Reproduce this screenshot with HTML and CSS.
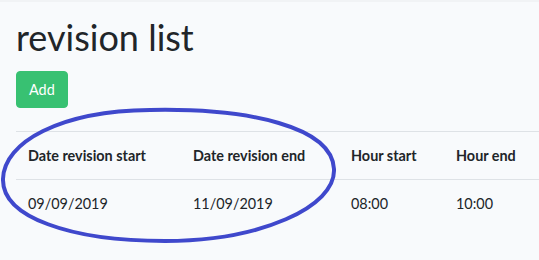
FILE: index.html
```html
<!DOCTYPE html>
<html lang="en">
<head>
    <meta charset="UTF-8">
    <meta name="viewport" content="width=device-width, initial-scale=1.0">
    <title>revision list</title>
    <link rel="stylesheet" href="styles.css">
</head>
<body>
    <div class="topbar"></div>
    <div class="container">
        <h1>revision list</h1>
        <button class="btn btn-success">Add</button>

        <div class="table-wrap">
            <table class="table">
                <thead>
                    <tr>
                        <th class="col-start">Date revision start</th>
                        <th class="col-end">Date revision end</th>
                        <th class="col-hstart">Hour start</th>
                        <th class="col-hend">Hour end</th>
                        <th></th>
                    </tr>
                </thead>
                <tbody>
                    <tr>
                        <td>09/09/2019</td>
                        <td>11/09/2019</td>
                        <td>08:00</td>
                        <td>10:00</td>
                        <td></td>
                    </tr>
                </tbody>
            </table>
        </div>

        <!-- hand-drawn highlight over the first two columns -->
        <svg class="mark" width="345" height="140" viewBox="0 0 345 140">
            <path d="M150 3 C 250 1, 332 20, 334 62 C 336 100, 260 134, 165 134 C 70 134, 2 110, 3 72 C 4 35, 60 4, 150 3 Z"
                  fill="none" stroke="#3f48cc" stroke-width="4"/>
        </svg>
    </div>
</body>
</html>
```

FILE: styles.css
```css
* {
    margin: 0;
    padding: 0;
    box-sizing: border-box;
}

body {
    font-family: Lato, 'Noto Sans', sans-serif;
    font-size: 14.4px;
    line-height: 1.6;
    color: #212529;
    background: #f8fafc;
    min-height: 100vh;
}

.topbar {
    height: 2px;
    background: #f1f3f5;
}

.container {
    position: relative;
    padding: 14px 0 40px 16px;
}

h1 {
    font-size: 36px;
    font-weight: 400;
    line-height: 1.2;
    margin-bottom: 12px;
}

.btn {
    display: inline-block;
    font-family: inherit;
    font-size: 14.4px;
    line-height: 1.6;
    padding: 6px 12px;
    border: 1px solid transparent;
    border-radius: 4px;
    cursor: pointer;
}

.btn-success {
    background: #38c172;
    border-color: #38c172;
    color: #fff;
}

.table-wrap {
    margin-top: 23px;
    overflow: hidden;
}

.table {
    border-collapse: collapse;
    width: 620px;
    text-align: left;
}

.table th,
.table td {
    padding: 12px;
    border-top: 1px solid #dee2e6;
    vertical-align: top;
}

.table th {
    font-weight: 700;
}

.table thead th {
    border-bottom: 1px solid #dee2e6;
}

.col-start { width: 165px; }
.col-end { width: 158px; }
.col-hstart { width: 105px; }
.col-hend { width: 100px; }

.mark {
    position: absolute;
    left: 0;
    top: 105px;
}
```
